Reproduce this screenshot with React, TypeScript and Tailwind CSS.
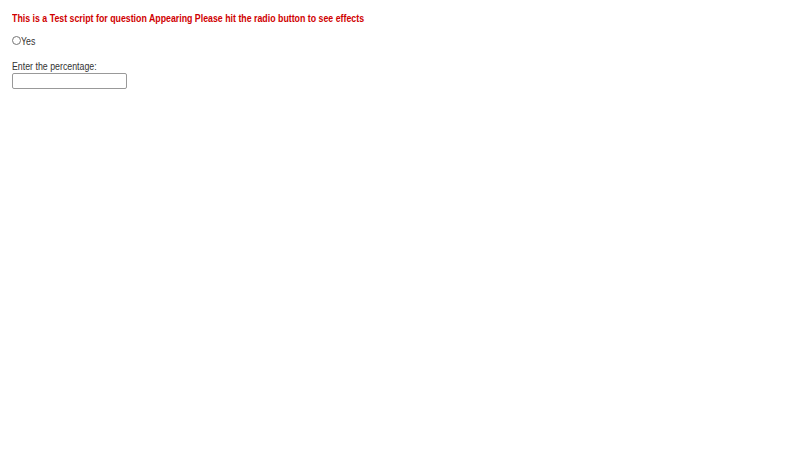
export default function App() {
  return (
    <div className="min-h-[450px] bg-white px-3 pt-[12px] font-['Liberation_Sans',Arial,sans-serif] text-[10px] text-[#333]">
      <p className="origin-left scale-x-[0.88] whitespace-nowrap font-bold leading-[13px] text-[#d00000]">
        This is a Test script for question Appearing Please hit the radio button to see effects
      </p>
      <label className="mt-[8px] flex items-center leading-[13px]">
        <input type="radio" name="q" className="m-0 h-[9px] w-[9px]" />
        <span className="mt-[2px] origin-left scale-x-[0.88]">Yes</span>
      </label>
      <div className="mt-[12px] flex flex-col">
        <span className="origin-left scale-x-[0.88] whitespace-nowrap leading-[13px]">Enter the percentage:</span>
        <input type="text" className="mt-0 h-[16px] w-[115px] rounded-[2px] border border-[#999] bg-white px-1 text-[11px]" />
      </div>
    </div>
  );
}
